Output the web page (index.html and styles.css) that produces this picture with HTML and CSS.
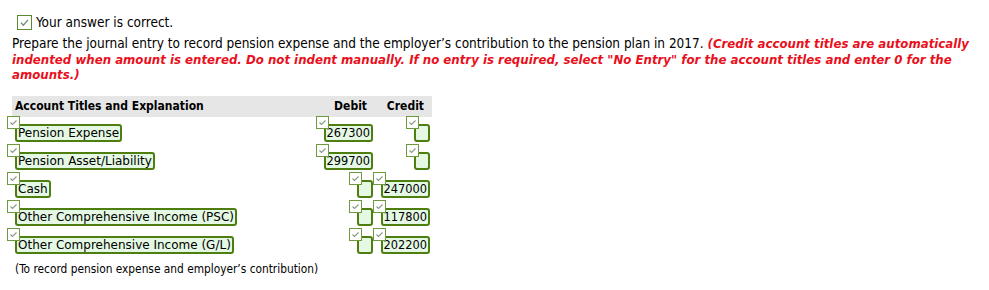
FILE: index.html
```html
<!DOCTYPE html>
<html>
<head>
<meta charset="utf-8">
<link rel="stylesheet" href="styles.css">
</head>
<body>
<div class="page">
  <div class="status">
    <span class="bigcheck"><svg viewBox="0 0 13 13" width="13" height="13"><path d="M3 6.8 L5.4 9.2 L10 3.8" fill="none" stroke="#6f8f6f" stroke-width="1.3"/></svg></span>
    <span>Your answer is correct.</span>
  </div>
  <p class="question">Prepare the journal entry to record pension expense and the employer’s contribution to the pension plan in 2017. <em class="note">(Credit account titles are automatically indented when amount is entered. Do not indent manually. If no entry is required, select "No Entry" for the account titles and enter 0 for the amounts.)</em></p>

  <div class="journal">
    <div class="head acct">Account Titles and Explanation</div>
    <div class="head num">Debit</div>
    <div class="head num">Credit</div>

    <div class="cell acct"><span class="field"><span class="chk"></span><span class="box text">Pension Expense</span></span></div>
    <div class="cell num"><span class="field"><span class="chk"></span><span class="box amt">267300</span></span></div>
    <div class="cell num"><span class="field"><span class="chk"></span><span class="box empty"></span></span></div>

    <div class="cell acct"><span class="field"><span class="chk"></span><span class="box text">Pension Asset/Liability</span></span></div>
    <div class="cell num"><span class="field"><span class="chk"></span><span class="box amt">299700</span></span></div>
    <div class="cell num"><span class="field"><span class="chk"></span><span class="box empty"></span></span></div>

    <div class="cell acct"><span class="field"><span class="chk"></span><span class="box text">Cash</span></span></div>
    <div class="cell num"><span class="field"><span class="chk"></span><span class="box empty"></span></span></div>
    <div class="cell num"><span class="field"><span class="chk"></span><span class="box amt">247000</span></span></div>

    <div class="cell acct"><span class="field"><span class="chk"></span><span class="box text">Other Comprehensive Income (PSC)</span></span></div>
    <div class="cell num"><span class="field"><span class="chk"></span><span class="box empty"></span></span></div>
    <div class="cell num"><span class="field"><span class="chk"></span><span class="box amt">117800</span></span></div>

    <div class="cell acct"><span class="field"><span class="chk"></span><span class="box text">Other Comprehensive Income (G/L)</span></span></div>
    <div class="cell num"><span class="field"><span class="chk"></span><span class="box empty"></span></span></div>
    <div class="cell num"><span class="field"><span class="chk"></span><span class="box amt">202200</span></span></div>
  </div>
  <div class="memo">(To record pension expense and employer’s contribution)</div>
</div>
</body>
</html>
```

FILE: styles.css
```css
html, body {
  margin: 0;
  padding: 0;
  background: #ffffff;
}
.page {
  padding: 15px 14px 0 12px;
  font-family: "DejaVu Sans Condensed", "DejaVu Sans", sans-serif;
  font-size: 13.5px;
  color: #000;
}
.status {
  display: flex;
  align-items: center;
  gap: 4px;
  margin-left: 5px;
  height: 15px;
  line-height: 15px;
}
.bigcheck {
  display: flex;
  align-items: center;
  justify-content: center;
  width: 13px;
  height: 13px;
  border: 1px solid #5d8a2e;
  background: #fff;
}
.question {
  margin: 6px 0 0 0;
  line-height: 14.5px;
}
.note {
  color: #e8101c;
  font-weight: bold;
  font-style: italic;
  font-family: "DejaVu Sans Condensed", "DejaVu Sans", sans-serif;
  font-size: 13.1px;
}
.journal {
  margin-top: 13.5px;
  width: 420px;
  display: grid;
  grid-template-columns: 303px 60px 57px;
  grid-template-rows: 21px;
  grid-auto-rows: 28px;
}
.journal .head {
  background: #e6e6e6;
  line-height: 21px;
  font-weight: bold;
  font-size: 12px;
}
.head.acct { padding-left: 3px; }
.head.num { text-align: right; padding-right: 8px; }
.cell {
  padding-top: 7px;
  display: flex;
}
.cell.acct { padding-left: 3px; }
.cell.num { justify-content: flex-end; padding-right: 2px; }
.field {
  position: relative;
  display: inline-flex;
}
.chk {
  position: absolute;
  left: -8px;
  top: -8px;
  width: 11px;
  height: 11px;
  border: 1px solid #6d9a3c;
  background: #fff url("data:image/svg+xml;utf8,<svg xmlns='http://www.w3.org/2000/svg' viewBox='0 0 11 11'><path d='M2.5 5.5 L4.5 7.5 L8.5 3.5' fill='none' stroke='%23889a88' stroke-width='1.1'/></svg>") center/11px 11px no-repeat;
  z-index: 2;
}
.box {
  box-sizing: border-box;
  height: 18px;
  border: 2px solid #4e7d10;
  border-radius: 3px;
  background: #e4f8e4;
  line-height: 14px;
  font-family: "DejaVu Sans", sans-serif;
  font-size: 12px;
  padding: 0 1px;
  white-space: nowrap;
}
.box.empty { width: 16px; }
.box.amt { min-width: 48px; font-size: 11.4px; padding: 0 1px; }
.memo {
  margin-top: 5px;
  padding-left: 3px;
  line-height: 14px;
  font-size: 11.8px;
}
```
